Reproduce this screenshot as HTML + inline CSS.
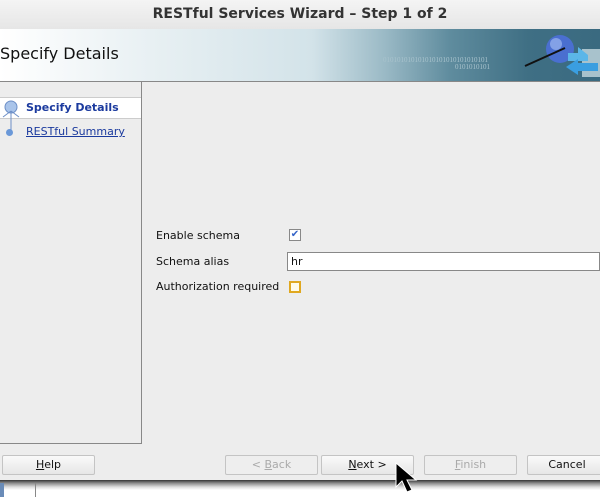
<!DOCTYPE html>
<html><head><style>
*{margin:0;padding:0;box-sizing:border-box}
body{width:600px;height:497px;overflow:hidden;background:#ededed;font-family:"DejaVu Sans","Liberation Sans",sans-serif;font-size:11px;color:#111;position:relative}
.t{position:absolute;left:0;top:0;width:600px;height:29px;background:linear-gradient(#f4f4f4,#e6e6e6);text-align:center;font-size:14px;font-weight:bold;color:#333;line-height:28px}
.h{position:absolute;left:0;top:29px;width:600px;height:53px;background:linear-gradient(90deg,#fff 0%,#e8f0f3 25%,#d3e3e9 52%,#9bbac6 64%,#5f8c9e 75%,#3f6f84 88%,#3a6a80 100%);border-bottom:1px solid #888}
.ht{position:absolute;left:0;top:15px;font-size:16px;color:#111}
.bin{position:absolute;left:383px;top:28px;font-size:7px;line-height:7px;color:#a9c3cd;font-family:"Liberation Serif",serif}
.lp{position:absolute;left:0;top:82px;width:142px;height:362px;border-right:1px solid #888;border-bottom:1px solid #888;background:#ededed}
.sel{position:absolute;left:0;top:15px;width:141px;height:22px;background:#fff;border-top:1px solid #ccc;border-bottom:1px solid #ccc}
.sel b{position:absolute;left:26px;top:3px;color:#1b3a9e;font-size:11px}
.lk{position:absolute;left:26px;top:43px;color:#1b3a9e;text-decoration:underline}
.lab{position:absolute;left:156px}
.btn{position:absolute;top:455px;height:20px;border:1px solid #c4c4c4;border-radius:2px;background:linear-gradient(#fafafa,#e6e6e6);text-align:center;line-height:18px}
.dis{color:#aaa;background:#eee}
.bot{position:absolute;left:0;top:480px;width:600px;height:17px;background:linear-gradient(#333 0,#888 3px,#ddd 7px,#fff 10px)}
</style></head><body>
<div class="t">RESTful Services Wizard – Step 1 of 2</div>
<div class="h"><div class="ht">Specify Details</div>
<div class="bin">010101010101010101010101010101<br><span style="padding-left:72px">0101010101</span></div>
<svg style="position:absolute;left:520px;top:2px" width="80" height="50">
<circle cx="40" cy="18" r="14" fill="#4a6fd0"/><circle cx="36" cy="13" r="6" fill="#9bb6f0" opacity=".7"/>
<line x1="5" y1="35" x2="45" y2="17" stroke="#111" stroke-width="2"/>
<rect x="62" y="18" width="18" height="28" fill="#a8c2cc"/>
<path d="M48 30 L68 30 L68 24 L58 16 L58 22 L48 22Z" fill="#5bb6e8"/>
<path d="M58 40 L78 40 L78 32 L58 32 L58 28 L46 36 L58 44Z" fill="#3a9ee0"/>
</svg></div>
<div class="lp">
<div class="sel"><svg style="position:absolute;left:2px;top:2px" width="18" height="30"><circle cx="9" cy="7" r="6" fill="#a9c4ea" stroke="#6d8fc7"/><line x1="1" y1="17" x2="9" y2="11" stroke="#6d8fc7"/><line x1="17" y1="17" x2="9" y2="11" stroke="#6d8fc7"/><line x1="9" y1="11" x2="9" y2="30" stroke="#6d8fc7"/></svg><b>Specify Details</b></div>
<div style="position:absolute;left:6px;top:47px;width:7px;height:7px;border-radius:50%;background:#6a98d8"></div>
<div class="lk">RESTful Summary</div>
</div>
<div class="lab" style="top:229px">Enable schema</div>
<div style="position:absolute;left:289px;top:229px;width:12px;height:12px;border:1px solid #888;background:#fff;color:#3564c8;font-size:10px;line-height:10px;text-align:center">✔</div>
<div class="lab" style="top:255px">Schema alias</div>
<div style="position:absolute;left:287px;top:252px;width:313px;height:19px;border:1px solid #888;background:#fff;padding:2px 3px">hr</div>
<div class="lab" style="top:280px">Authorization required</div>
<div style="position:absolute;left:289px;top:281px;width:12px;height:12px;border:2px solid #e0a820;background:#fffbe8"></div>
<div class="btn" style="left:2px;width:93px"><u>H</u>elp</div>
<div class="btn dis" style="left:225px;width:93px">&lt; <u>B</u>ack</div>
<div class="btn" style="left:321px;width:93px"><u>N</u>ext &gt;</div>
<div class="btn dis" style="left:424px;width:93px"><u>F</u>inish</div>
<div class="btn" style="left:527px;width:80px">Cancel</div>
<div class="bot"><div style="position:absolute;left:0;top:3px;width:4px;height:14px;background:#6a8cb8"></div><div style="position:absolute;left:35px;top:3px;width:1px;height:14px;background:#888"></div></div>
<svg style="position:absolute;left:395px;top:462px" width="30" height="35"><path d="M1 1 L1 25 L7 19 L12 30 L17 28 L12 18 L21 18Z" fill="#000" stroke="#fff" stroke-width="1"/></svg>
</body></html>
